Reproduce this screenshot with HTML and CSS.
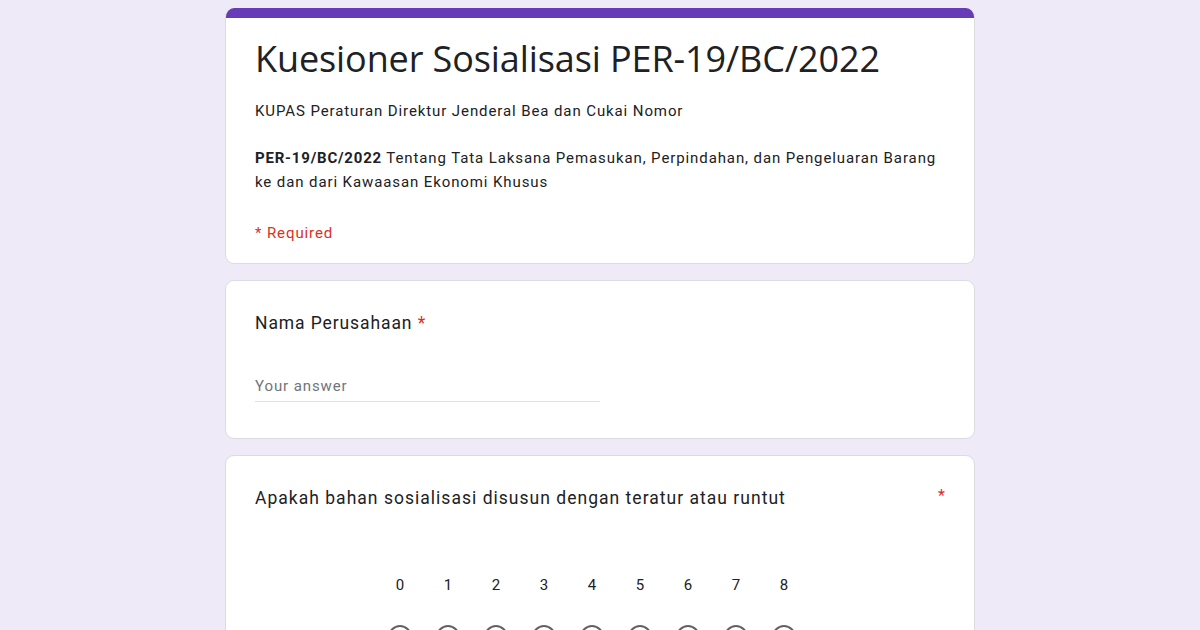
FILE: index.html
```html
<!DOCTYPE html>
<html lang="id">
<head>
<meta charset="utf-8">
<title>Kuesioner Sosialisasi PER-19/BC/2022</title>
<link rel="stylesheet" href="styles.css">
</head>
<body>
<main class="form">
  <section class="card header-card">
    <div class="accent"></div>
    <div class="header-body">
      <h1 class="title">Kuesioner Sosialisasi PER-19/BC/2022</h1>
      <p class="desc">KUPAS Peraturan Direktur Jenderal Bea dan Cukai Nomor</p>
      <p class="desc desc-2"><b>PER-19/BC/2022</b> Tentang Tata Laksana Pemasukan, Perpindahan, dan Pengeluaran Barang ke dan dari Kawaasan Ekonomi Khusus</p>
      <p class="required-note">* Required</p>
    </div>
  </section>

  <section class="card question-card">
    <div class="question">Nama Perusahaan <span class="star">*</span></div>
    <div class="text-input">Your answer</div>
  </section>

  <section class="card question-card scale-card">
    <div class="question-row">
      <div class="question">Apakah bahan sosialisasi disusun dengan teratur atau runtut</div>
      <span class="star">*</span>
    </div>
    <div class="scale">
      <div class="opt"><span class="num">0</span><span class="radio"></span></div>
      <div class="opt"><span class="num">1</span><span class="radio"></span></div>
      <div class="opt"><span class="num">2</span><span class="radio"></span></div>
      <div class="opt"><span class="num">3</span><span class="radio"></span></div>
      <div class="opt"><span class="num">4</span><span class="radio"></span></div>
      <div class="opt"><span class="num">5</span><span class="radio"></span></div>
      <div class="opt"><span class="num">6</span><span class="radio"></span></div>
      <div class="opt"><span class="num">7</span><span class="radio"></span></div>
      <div class="opt"><span class="num">8</span><span class="radio"></span></div>
    </div>
  </section>
</main>
</body>
</html>
```

FILE: styles.css
```css
html, body {
  margin: 0;
  padding: 0;
  height: 100%;
  overflow: hidden;
}
body {
  background: #efeaf8;
  font-family: Roboto, "Liberation Sans", Arial, sans-serif;
  color: #202124;
}
.form {
  width: 750px;
  margin: 8px auto 0;
  display: flex;
  flex-direction: column;
  gap: 16px;
}
.card {
  background: #fff;
  border: 1px solid #dadce0;
  border-radius: 9px;
  box-sizing: border-box;
  overflow: hidden;
}
.header-card {
  border-top: none;
}
.accent {
  height: 10px;
  background: #673ab7;
  margin: 0 -1px;
}
.header-body {
  padding: 17px 29px 18px;
}
.title {
  margin: 0;
  font-family: "Open Sans", Roboto, sans-serif;
  font-weight: 400;
  font-size: 36px;
  line-height: 48px;
  letter-spacing: -0.1px;
}
.desc {
  margin: 16px 0 0;
  font-size: 15px;
  line-height: 24px;
  letter-spacing: 0.9px;
}
.desc b { font-weight: 700; letter-spacing: 0.8px; }
.desc-2 { margin-top: 23px; }
.required-note {
  margin: 27px 0 0;
  color: #d93025;
  font-size: 15px;
  line-height: 24px;
  letter-spacing: 0.9px;
}
.question-card {
  padding: 30px 29px 36px;
}
.question {
  font-size: 17.5px;
  line-height: 24px;
  letter-spacing: 0.9px;
}
.scale-card .question {
  letter-spacing: 1.02px;
}
.star { color: #d93025; }
.text-input {
  margin-top: 39px;
  width: 345px;
  font-size: 15px;
  line-height: 24px;
  color: #70757a;
  padding-bottom: 3px;
  border-bottom: 1px solid #e0e0e0;
  letter-spacing: 0.9px;
}
.scale-card {
  padding-top: 30px;
}
.question-row {
  display: flex;
  justify-content: space-between;
}
.scale {
  margin-top: 63px;
  display: flex;
  justify-content: center;
  padding-right: 16px;
}
.opt {
  width: 48px;
  display: flex;
  flex-direction: column;
  align-items: center;
  gap: 28px;
}
.num {
  font-size: 15px;
  line-height: 24px;
}
.radio {
  width: 20px;
  height: 20px;
  border: 2px solid #5f6368;
  border-radius: 50%;
}
```
